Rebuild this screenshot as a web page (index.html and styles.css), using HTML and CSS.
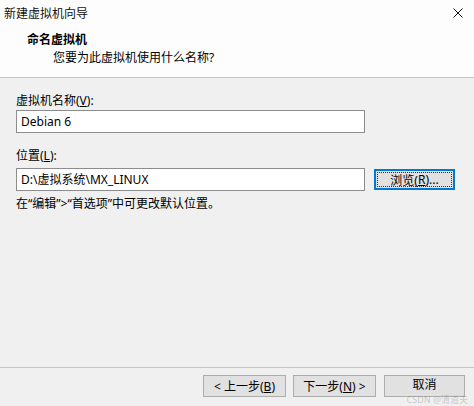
FILE: index.html
```html
<!DOCTYPE html>
<html lang="zh-CN">
<head>
  <meta charset="UTF-8">
  <title>新建虚拟机向导</title>
  <link rel="stylesheet" href="styles.css">
</head>
<body>
  <div class="window">
    <div class="header">
      <div class="titlebar">
        <span class="caption">新建虚拟机向导</span>
        <svg class="close" width="10" height="10" viewBox="0 0 10 10">
          <path d="M0.5 0.5 L9.5 9.5 M9.5 0.5 L0.5 9.5" stroke="#111" stroke-width="1"/>
        </svg>
      </div>
      <div class="heading">命名虚拟机</div>
      <div class="subheading">您要为此虚拟机使用什么名称?</div>
    </div>

    <div class="content">
      <div class="label">虚拟机名称(<u>V</u>):</div>
      <div class="field name-field">Debian 6</div>

      <div class="label second">位置(<u>L</u>):</div>
      <div class="row">
        <div class="field path-field">D:\虚拟系统\MX_LINUX</div>
        <button class="btn browse"><span class="focus">浏览(<u>R</u>)...</span></button>
      </div>
      <div class="hint">在“编辑”&gt;“首选项”中可更改默认位置。</div>
    </div>

    <div class="footer">
      <button class="btn">&lt; 上一步(<u>B</u>)</button>
      <button class="btn">下一步(<u>N</u>) &gt;</button>
      <button class="btn cancel"><span class="cancel-text">取消</span></button>
      <span class="watermark">CSDN @清道夫</span>
    </div>
  </div>
</body>
</html>
```

FILE: styles.css
```css
body {
  margin: 0;
  background: #f0f0f0;
  font-family: "Noto Sans", "Noto Sans CJK SC", sans-serif;
  font-size: 12px;
  color: #000;
}
.window {
  width: 474px;
  height: 406px;
  display: flex;
  flex-direction: column;
  background: #f0f0f0;
  overflow: hidden;
}
.header {
  background: #fdfdfe;
  border-bottom: 1px solid #c4c4c4;
  box-sizing: border-box;
  height: 78px;
}
.titlebar {
  height: 26px;
  display: flex;
  align-items: center;
  justify-content: space-between;
  padding: 0 11px 0 4px;
}
.caption {
  font-size: 12px;
  color: #111;
}
.close {
  margin-top: -1px;
}
.heading {
  margin-top: 6px;
  padding-left: 27px;
  line-height: 16px;
  font-weight: bold;
}
.subheading {
  margin-top: 2px;
  padding-left: 53px;
  line-height: 16px;
}
.content {
  flex: 1;
  padding: 15px 16px 0 16px;
}
.label {
  line-height: 16px;
}
.label.second {
  margin-top: 15px;
}
.field {
  height: 23px;
  box-sizing: border-box;
  border: 1px solid #8c8c8c;
  background: #fff;
  padding: 0 4px;
  line-height: 21px;
  font-size: 12px;
}
.name-field {
  margin-top: 1px;
  width: 349px;
}
.row {
  margin-top: 4px;
  display: flex;
  align-items: flex-start;
  gap: 9px;
}
.path-field {
  width: 349px;
}
.hint {
  margin-top: 5px;
  line-height: 16px;
}
.btn {
  font-family: inherit;
  font-size: 12px;
  color: #000;
  background: #e1e1e1;
  border: 1px solid #adadad;
  height: 22px;
  width: 83px;
  padding: 0;
  margin: 0;
  box-sizing: border-box;
}
.browse {
  margin-top: 1px;
  width: 81px;
  height: 21px;
  border: 2px solid #0078d7;
  padding: 1px;
}
.browse .focus {
  display: flex;
  align-items: center;
  justify-content: center;
  height: 100%;
  border: 1px dotted #333;
  box-sizing: border-box;
}
.footer {
  height: 39px;
  border-top: 1px solid #c4c4c4;
  display: flex;
  justify-content: flex-end;
  align-items: flex-start;
  padding: 7px 9px 0 0;
  box-sizing: border-box;
  gap: 7px;
  position: relative;
}
.footer .cancel {
  width: 81px;
  margin-left: 1px;
  line-height: 14px;
}
.cancel-text {
  position: relative;
  top: -1px;
}
.watermark {
  position: absolute;
  right: 6px;
  bottom: 1px;
  font-size: 9px;
  line-height: 11px;
  color: rgba(120, 120, 120, 0.35);
}
```
